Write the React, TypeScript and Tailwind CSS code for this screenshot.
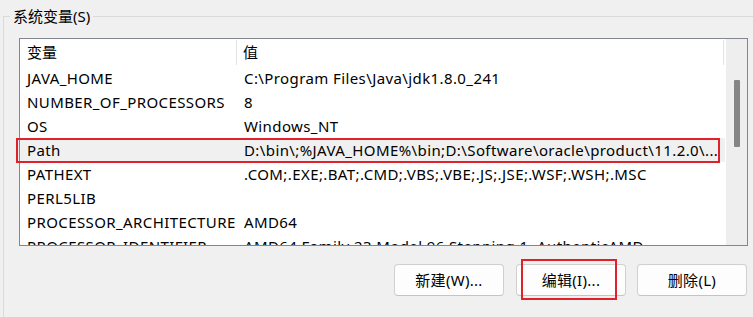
import React from 'react';

const rows = [
  { name: 'JAVA_HOME', value: 'C:\\Program Files\\Java\\jdk1.8.0_241' },
  { name: 'NUMBER_OF_PROCESSORS', value: '8' },
  { name: 'OS', value: 'Windows_NT' },
  { name: 'Path', value: 'D:\\bin\\;%JAVA_HOME%\\bin;D:\\Software\\oracle\\product\\11.2.0\\...' },
  { name: 'PATHEXT', value: '.COM;.EXE;.BAT;.CMD;.VBS;.VBE;.JS;.JSE;.WSF;.WSH;.MSC' },
  { name: 'PERL5LIB', value: '' },
  { name: 'PROCESSOR_ARCHITECTURE', value: 'AMD64' },
  { name: 'PROCESSOR_IDENTIFIER', value: 'AMD64 Family 23 Model 96 Stepping 1, AuthenticAMD' },
];

function Button({ label, className = '' }: { label: string; className?: string }) {
  return (
    <button
      className={
        'w-[110px] h-[32px] bg-[#fdfdfd] border border-[#d0d0d0] border-b-[#c4c4c4] rounded-[4px] text-[15px] tracking-[0.3px] text-black ' +
        className
      }
    >
      {label}
    </button>
  );
}

export default function App() {
  return (
    <div
      className="relative w-[753px] h-[317px] overflow-hidden bg-[#f0f0f0] text-black"
      style={{ fontFamily: '"Noto Sans", "Noto Sans CJK SC", sans-serif' }}
    >
      {/* 系统变量 分组框 */}
      <div className="relative mt-[16px] ml-[3px] h-[301px] border-l border-t border-[#dadada] pl-[15px] pt-[21px]">
        <span className="absolute -top-[11px] left-[6px] px-[3px] bg-[#f0f0f0] text-[15px] leading-[20px]">
          系统变量(S)
        </span>

        <div className="flex w-[729px] h-[208px] border border-[#82878f] bg-white overflow-hidden">
          <div className="w-[706px] flex flex-col">
            {/* header */}
            <div className="flex h-[27px] shrink-0 text-[15px]">
              <div className="w-[217px] pl-[7px] border-r border-[#e3e3e3] my-[1px] leading-[25px]">变量</div>
              <div className="w-[487px] pl-[6px] border-r border-[#e3e3e3] my-[1px] leading-[25px]">值</div>
            </div>
            {rows.map((r) => (
              <div
                key={r.name}
                className={
                  'flex h-[24px] shrink-0 text-[15px] leading-[24px] tracking-[0.4px] whitespace-nowrap ' +
                  (r.name === 'Path' ? 'bg-[#f0f0f0] w-[705px]' : '')
                }
              >
                <div className="w-[217px] pl-[7px] overflow-hidden">{r.name}</div>
                <div className="w-[487px] pl-[7px] overflow-hidden">{r.value}</div>
              </div>
            ))}
          </div>
          {/* scrollbar */}
          <div className="w-[21px] h-full bg-[#eeeeee] flex justify-center pt-[41px]">
            <div className="w-[6px] h-[67px] bg-[#858585] rounded-[1px]" />
          </div>
        </div>

        <div className="flex justify-end w-[729px] pr-[1px] mt-[18px]">
          <Button label="新建(W)..." className="mr-[12px]" />
          <Button label="编辑(I)..." className="mr-[11px]" />
          <Button label="删除(L)" />
        </div>
      </div>

      {/* 红框标注 */}
      <div className="absolute left-[16px] top-[138px] w-[704px] h-[25px] border-2 border-[#e0202a]" />
      <div className="absolute left-[521px] top-[259px] w-[96px] h-[41px] border-2 border-[#e0202a]" />
    </div>
  );
}
